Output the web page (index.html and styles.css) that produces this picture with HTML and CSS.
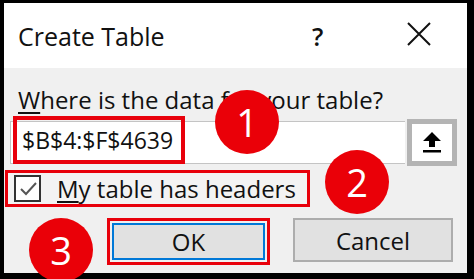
FILE: index.html
```html
<!DOCTYPE html>
<html>
<head>
<meta charset="utf-8">
<link rel="stylesheet" href="styles.css">
</head>
<body>
<div class="dialog">
  <div class="titlebar">
    <span class="title">Create Table</span>
    <span class="help">?</span>
    <span class="close">
      <svg width="24" height="24" viewBox="0 0 24 24"><path d="M1 1 L23 23 M23 1 L1 23" stroke="#111" stroke-width="2" fill="none"/></svg>
    </span>
  </div>
  <div class="content">
    <div class="label"><u>W</u>here is the data for your table?</div>
    <div class="input-row">
      <div class="field">
        <span class="range-hl">$B$4:$F$4639</span>
      </div>
      <div class="pick">
        <svg width="20" height="24" viewBox="0 0 20 24"><path d="M10 2 L19 11 L13 11 L13 17 L7 17 L7 11 L1 11 Z" fill="#000"/><rect x="1" y="20" width="18" height="2.5" fill="#000"/></svg>
      </div>
    </div>
    <div class="check-row">
      <div class="check-hl">
        <span class="box">
          <svg width="22" height="22" viewBox="0 0 22 22"><path d="M4 11 L9 16 L19 5" stroke="#555" stroke-width="2" fill="none"/></svg>
        </span>
        <span class="check-text"><u>M</u>y table has headers</span>
      </div>
    </div>
    <div class="buttons">
      <div class="ok-hl"><div class="btn ok">OK</div></div>
      <div class="btn cancel">Cancel</div>
    </div>
  </div>
  <div class="badge b1">1</div>
  <div class="badge b2">2</div>
  <div class="badge b3">3</div>
</div>
</body>
</html>
```
FILE: styles.css
```css
html, body {
  margin: 0;
  padding: 0;
  background: #000;
  width: 474px;
  height: 279px;
  overflow: hidden;
}
.dialog {
  position: relative;
  margin: 3px 7px 0 4px;
  width: 463px;
  height: 270px;
  background: #f0f0f0;
  display: flex;
  flex-direction: column;
  font-family: "Open Sans", "Noto Sans", sans-serif;
  color: #111;
}
.titlebar {
  height: 65px;
  background: #fff;
  display: flex;
  align-items: center;
  padding-left: 14px;
  flex: none;
}
.title {
  font-size: 25px;
  width: 294px;
}
.help {
  font-size: 25px;
  font-weight: 600;
  width: 95px;
}
.close {
  display: flex;
  margin-top: -4px;
}
.content {
  padding: 0 10px 0 6px;
  display: flex;
  flex-direction: column;
}
.label {
  font-size: 24px;
  line-height: 28px;
  margin-top: 18px;
  padding-left: 8px;
}
.label u, .check-text u {
  text-decoration-thickness: 2px;
  text-underline-offset: 3px;
}
.input-row {
  display: flex;
  margin-top: 5px;
  height: 46px;
  align-items: center;
}
.field {
  flex: 1;
  height: 43px;
  background: #fff;
  border: 1px solid #c4c4c4;
  border-right: none;
  box-sizing: border-box;
  position: relative;
}
.range-hl {
  position: absolute;
  left: 2px;
  top: -6px;
  width: 172px;
  height: 48px;
  box-sizing: border-box;
  border: 4px solid #e8000b;
  font-size: 23px;
  line-height: 40px;
  padding-left: 5px;
  color: #111;
}
.pick {
  width: 50px;
  height: 47px;
  box-sizing: border-box;
  border: 5px solid #b4b4b4;
  background: #fff;
  display: flex;
  align-items: center;
  justify-content: center;
  margin-left: 2px;
}
.check-row {
  display: flex;
  margin-top: 5px;
}
.check-hl {
  margin-left: -5px;
  width: 305px;
  height: 37px;
  box-sizing: border-box;
  border: 3px solid #e8000b;
  background: #f3f3f3;
  display: flex;
  align-items: center;
  padding-left: 6px;
}
.box {
  width: 27px;
  height: 27px;
  box-sizing: border-box;
  border: 2px solid #333;
  background: #fff;
  display: flex;
  align-items: center;
  justify-content: center;
}
.check-text {
  font-size: 24px;
  margin-left: 16px;
}
.buttons {
  display: flex;
  justify-content: flex-end;
  margin-top: 11px;
  padding-right: 4px;
  gap: 23px;
}
.ok-hl {
  width: 163px;
  height: 47px;
  box-sizing: border-box;
  border: 3px solid #e8000b;
  padding: 2px;
}
.btn {
  background: #e1e1e1;
  box-sizing: border-box;
  display: flex;
  align-items: center;
  justify-content: center;
  font-size: 24px;
}
.ok {
  width: 100%;
  height: 100%;
  border: 2px solid #0078d7;
}
.cancel {
  width: 160px;
  height: 44px;
  border: 2px solid #adadad;
}
.badge {
  position: absolute;
  width: 64px;
  height: 64px;
  border-radius: 50%;
  background: #ea0008;
  color: #fff;
  font-size: 38px;
  display: flex;
  align-items: center;
  justify-content: center;
}
.b1 { left: 211px; top: 87px; }
.b2 { left: 321px; top: 147px; }
.b3 { left: 25px; top: 215px; }
```
